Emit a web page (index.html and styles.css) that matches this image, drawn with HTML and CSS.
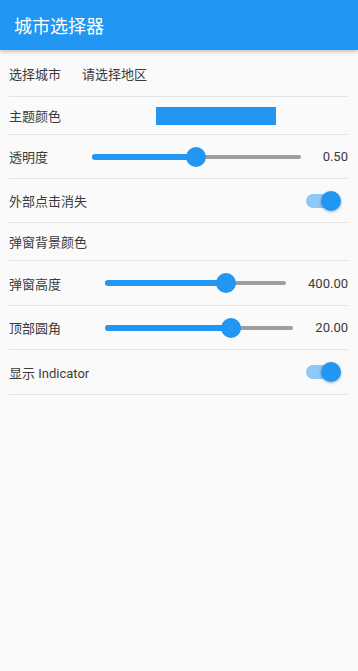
FILE: index.html
```html
<!DOCTYPE html>
<html lang="zh">
<head>
  <meta charset="UTF-8">
  <title>城市选择器</title>
  <link rel="stylesheet" href="styles.css">
</head>
<body>
  <header class="app-bar">城市选择器</header>
  <main class="list">
    <div class="row row-first">
      <span class="label label-gap">选择城市</span>
      <span class="label">请选择地区</span>
    </div>
    <div class="row row-text">
      <span class="label">主题颜色</span>
      <span class="color-box"></span>
    </div>
    <div class="row row-control">
      <span class="label">透明度</span>
      <div class="slider">
        <div class="track"></div>
        <div class="track-active" style="width: 50%"></div>
        <div class="thumb" style="left: 50%"></div>
      </div>
      <span class="value">0.50</span>
    </div>
    <div class="row row-control">
      <span class="label">外部点击消失</span>
      <div class="switch">
        <div class="switch-track"></div>
        <div class="switch-thumb"></div>
      </div>
    </div>
    <div class="row row-text">
      <span class="label">弹窗背景颜色</span>
    </div>
    <div class="row row-control tall">
      <span class="label">弹窗高度</span>
      <div class="slider">
        <div class="track"></div>
        <div class="track-active" style="width: 66.7%"></div>
        <div class="thumb" style="left: 66.7%"></div>
      </div>
      <span class="value">400.00</span>
    </div>
    <div class="row row-control">
      <span class="label">顶部圆角</span>
      <div class="slider">
        <div class="track"></div>
        <div class="track-active" style="width: 66.7%"></div>
        <div class="thumb" style="left: 66.7%"></div>
      </div>
      <span class="value">20.00</span>
    </div>
    <div class="row row-control tall">
      <span class="label">显示 Indicator</span>
      <div class="switch">
        <div class="switch-track"></div>
        <div class="switch-thumb"></div>
      </div>
    </div>
  </main>
</body>
</html>
```

FILE: styles.css
```css
body, html {
  margin: 0;
  padding: 0;
  height: 100%;
  font-family: Roboto, "Noto Sans CJK SC", sans-serif;
  background: #fafafa;
}
.app-bar {
  height: 50px;
  display: flex;
  align-items: center;
  padding-left: 14px;
  background-color: #2196F3;
  color: #fff;
  font-size: 18px;
  box-shadow: 0 2px 4px rgba(0, 0, 0, 0.22);
  position: relative;
}
.list {
  padding: 0 10px 0 9px;
}
.row {
  display: flex;
  align-items: center;
  border-bottom: 1px solid #e3e3e3;
  box-sizing: border-box;
  font-size: 13px;
  color: #3a3a3a;
}
.row-first {
  height: 47px;
}
.row-text {
  height: 38px;
}
.row-control {
  height: 44px;
}
.row-control.tall {
  height: 45px;
}
.label-gap {
  margin-right: 21px;
}
.color-box {
  width: 120px;
  height: 18px;
  margin-left: 95px;
  background: #2196F3;
}
.slider {
  flex: 1;
  height: 20px;
  margin: 0 22px 0 44px;
  position: relative;
}
.track {
  position: absolute;
  left: 0;
  right: 0;
  top: 8px;
  height: 4px;
  border-radius: 2px;
  background: #9e9e9e;
}
.track-active {
  position: absolute;
  left: 0;
  top: 7px;
  height: 6px;
  border-radius: 3px;
  background: #2196F3;
}
.thumb {
  position: absolute;
  top: 0;
  width: 20px;
  height: 20px;
  border-radius: 50%;
  background: #2196F3;
  transform: translateX(-50%);
}
.value {
  font-size: 13px;
}
.switch {
  width: 35px;
  height: 20px;
  margin-left: auto;
  margin-right: 7px;
  position: relative;
}
.switch-track {
  position: absolute;
  left: 0;
  top: 3px;
  width: 33px;
  height: 14px;
  border-radius: 7px;
  background: rgba(33, 150, 243, 0.5);
}
.switch-thumb {
  position: absolute;
  right: 0;
  top: 0;
  width: 20px;
  height: 20px;
  border-radius: 50%;
  background: #2196F3;
  box-shadow: 0 1px 3px rgba(0, 0, 0, 0.3);
}
```
